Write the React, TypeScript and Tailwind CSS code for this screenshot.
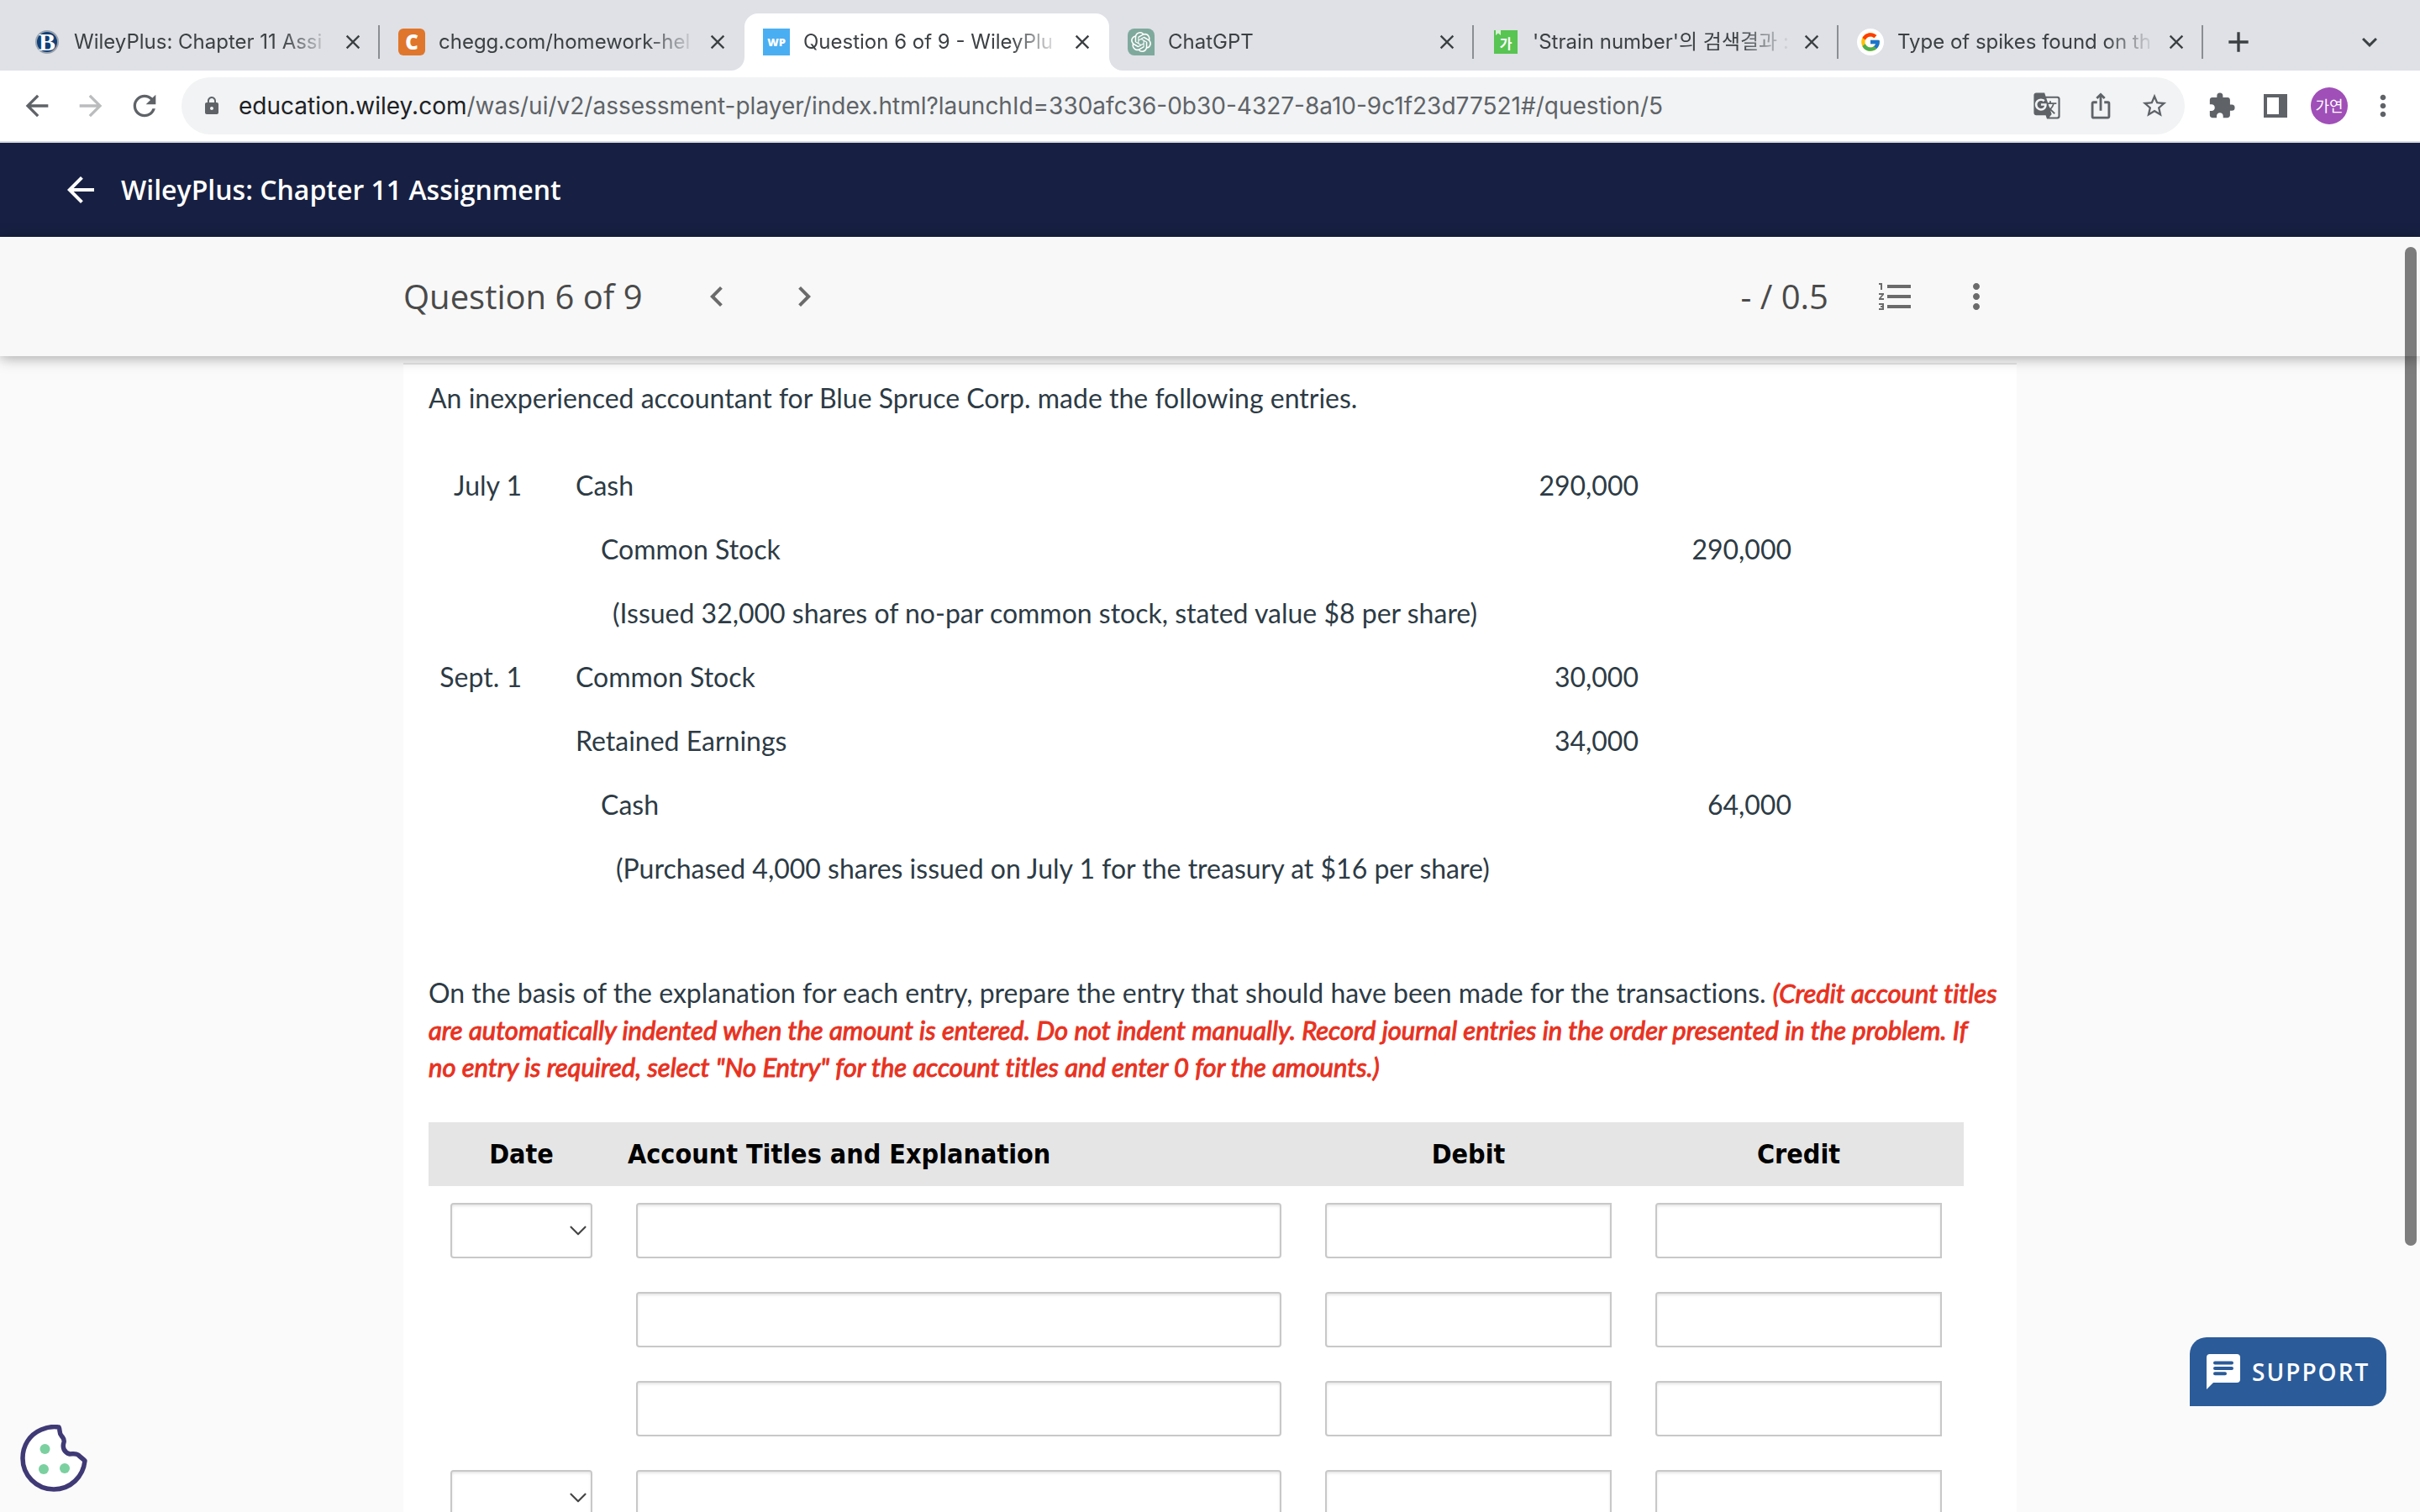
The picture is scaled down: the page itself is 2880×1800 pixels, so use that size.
/**
 * App.tsx — Assessment player inside a browser window
 *
 * 1. Browser chrome (tabs + toolbar)
 * 2. Course header and question bar
 * 3. Question content with the answer table
 */

import type { ReactNode } from 'react'
import { ChevronDown } from 'lucide-react'
import { FcGoogle } from 'react-icons/fc'
import { SiOpenai } from 'react-icons/si'
import {
  MdAdd,
  MdArrowBack,
  MdArrowForward,
  MdChevronLeft,
  MdChevronRight,
  MdClose,
  MdExtension,
  MdFormatListNumbered,
  MdGTranslate,
  MdIosShare,
  MdKeyboardArrowDown,
  MdLock,
  MdMoreVert,
  MdRefresh,
  MdStarBorder,
} from 'react-icons/md'

type Tab = { title: string; icon: ReactNode; active?: boolean; divider?: boolean }

const TABS: Tab[] = [
  { title: 'WileyPlus: Chapter 11 Assi', icon: <BartlebyIcon />, divider: true },
  { title: 'chegg.com/homework-hel', icon: <CheggIcon /> },
  { title: 'Question 6 of 9 - WileyPlu', icon: <WileyIcon />, active: true },
  { title: 'ChatGPT', icon: <ChatGptIcon />, divider: true },
  { title: "'Strain number'의 검색결과 :", icon: <DictIcon />, divider: true },
  { title: 'Type of spikes found on th', icon: <GoogleIcon />, divider: true },
]

type Entry = { date?: string; text: string; indent: string; debit?: string; credit?: string }

const ENTRIES: Entry[] = [
  { date: 'July 1', text: 'Cash', indent: 'pl-16', debit: '290,000' },
  { text: 'Common Stock', indent: 'pl-[94px]', credit: '290,000' },
  { text: '(Issued 32,000 shares of no-par common stock, stated value $8 per share)', indent: 'pl-27' },
  { date: 'Sept. 1', text: 'Common Stock', indent: 'pl-16', debit: '30,000' },
  { text: 'Retained Earnings', indent: 'pl-16', debit: '34,000' },
  { text: 'Cash', indent: 'pl-[94px]', credit: '64,000' },
  { text: '(Purchased 4,000 shares issued on July 1 for the treasury at $16 per share)', indent: 'pl-28' },
]

// true → the row starts a new transaction and has a date drop-down
const ANSWER_ROWS = [true, false, false, true]

export default function App() {
  return (
    <div className="relative flex h-screen flex-col overflow-hidden bg-[#fafafa]">
      <TabStrip />
      <Toolbar />
      <CourseHeader />
      <QuestionBar />
      <main className="min-h-0 flex-1 overflow-hidden pt-2 font-['Lato',sans-serif] text-[32px] leading-[44px] text-[#2d3b45] [font-variant-ligatures:none]">
        <div className="mx-auto max-w-[1920px] border-t-2 border-[#e5e5e5] bg-white pt-[18px] pr-2 pl-[30px]">
          <p>An inexperienced accountant for Blue Spruce Corp. made the following entries.</p>
          <EntriesTable />
          <p className="mt-[88px]">
            On the basis of the explanation for each entry, prepare the entry that should have been made for the
            transactions.{' '}
            <em className="text-[31px] text-[#e8321f] [-webkit-text-stroke:1px_#e8321f]">
              (Credit account titles are automatically indented when the amount is entered. Do not indent manually.
              Record journal entries in the order presented in the problem. If
              <br />
              no entry is required, select "No Entry" for the account titles and enter 0 for the amounts.)
            </em>
          </p>
          <AnswerTable />
        </div>
      </main>

      {/* Scrollbar thumb, floats over the page */}
      <div className="absolute top-[294px] right-1 z-20 h-[1189px] w-3.5 rounded-full bg-black/50" />
      <CookieButton />
      <SupportButton />
    </div>
  )
}

/* ---------- Browser chrome ---------- */

function TabStrip() {
  return (
    <div className="flex h-[84px] shrink-0 items-end bg-[#dfe1e6] pl-[18px] font-['Inter','Noto_Sans_CJK_KR',sans-serif] text-[#3c4043]">
      {TABS.map((tab) => (
        <div
          key={tab.title}
          className={
            tab.active
              ? 'relative flex h-[68px] w-[434px] items-center rounded-t-2xl bg-white pl-[22px] pr-[18px]'
              : 'relative flex h-[68px] w-[434px] items-center pl-[22px] pr-[18px]'
          }
        >
          {tab.active && <TabFeet />}
          <span className="flex w-8 shrink-0 justify-center">{tab.icon}</span>
          <span className="ml-4 min-w-0 flex-1 overflow-hidden whitespace-nowrap text-[24px] leading-8 [mask-image:linear-gradient(to_right,black_80%,transparent)]">
            {tab.title}
          </span>
          <button type="button" aria-label={`Close ${tab.title}`} className="ml-2.5">
            <MdClose size={28} />
          </button>
          {tab.divider && <span className="absolute top-3.5 right-0 h-10 w-0.5 bg-[#8b8e93]" />}
        </div>
      ))}
      <button type="button" aria-label="New tab" className="ml-[22px] flex h-[68px] items-center">
        <MdAdd size={40} />
      </button>
      <button type="button" aria-label="Search tabs" className="mr-[42px] ml-auto flex h-[68px] items-center">
        <MdKeyboardArrowDown size={36} />
      </button>
    </div>
  )
}

// Small curves at the bottom corners of the active tab
function TabFeet() {
  return (
    <>
      <svg className="absolute bottom-0 -left-4 h-4 w-4" viewBox="0 0 16 16" fill="#fff">
        <path d="M16 0v16H0A16 16 0 0 0 16 0z" />
      </svg>
      <svg className="absolute -right-4 bottom-0 h-4 w-4" viewBox="0 0 16 16" fill="#fff">
        <path d="M0 0v16h16A16 16 0 0 1 0 0z" />
      </svg>
    </>
  )
}

function Toolbar() {
  return (
    <div className="flex h-[86px] shrink-0 items-center border-b-2 border-[#dadce0] bg-white pr-6 pl-6 font-['Inter','Noto_Sans_CJK_KR',sans-serif] text-[#5f6368]">
      <button type="button" aria-label="Back">
        <MdArrowBack size={40} />
      </button>
      <button type="button" aria-label="Forward" className="ml-6 text-[#babcbe]">
        <MdArrowForward size={40} />
      </button>
      <button type="button" aria-label="Reload" className="ml-6">
        <MdRefresh size={40} />
      </button>
      <div className="ml-6 flex h-[68px] flex-1 items-center rounded-full bg-[#f1f3f4] pr-[19px] pl-6">
        <MdLock size={24} />
        <div
          role="textbox"
          aria-label="Address"
          className="ml-5 flex-1 overflow-hidden whitespace-nowrap text-[28px] leading-9"
        >
          <span className="text-[#202124]">education.wiley.com</span>
          <span>/was/ui/v2/assessment-player/index.html?launchId=330afc36-0b30-4327-8a10-9c1f23d77521#/question/5</span>
        </div>
        <div className="flex gap-[30px]">
          <button type="button" aria-label="Translate">
            <MdGTranslate size={34} />
          </button>
          <button type="button" aria-label="Share">
            <MdIosShare size={34} />
          </button>
          <button type="button" aria-label="Bookmark">
            <MdStarBorder size={34} />
          </button>
        </div>
      </div>
      <button type="button" aria-label="Extensions" className="ml-[27px]">
        <MdExtension size={34} />
      </button>
      <button type="button" aria-label="Side panel" className="ml-[33px]">
        <svg width="28" height="28" viewBox="0 0 28 28" fill="currentColor">
          <path d="M0 0h28v28H0zM4 4v20h14V4z" fillRule="evenodd" />
        </svg>
      </button>
      <button
        type="button"
        aria-label="Profile"
        className="ml-7 flex size-11 items-center justify-center rounded-full bg-[#a04fb8] text-[18px] text-white"
      >
        가연
      </button>
      <button type="button" aria-label="Menu" className="ml-[22px]">
        <MdMoreVert size={40} />
      </button>
    </div>
  )
}

/* ---------- Wiley header + question bar ---------- */

function CourseHeader() {
  return (
    <header className="flex h-28 shrink-0 items-center bg-[#172042] pl-[72px] font-['Open_Sans',sans-serif] text-white">
      <button type="button" aria-label="Back to course">
        <MdArrowBack size={48} />
      </button>
      <h1 className="ml-6 text-[32px] font-semibold">WileyPlus: Chapter 11 Assignment</h1>
    </header>
  )
}

function QuestionBar() {
  return (
    <div className="z-10 shrink-0 bg-[#f8f8f8] shadow-[0_2px_16px_rgba(0,0,0,0.35)]">
      <div className="mx-auto flex h-[142px] max-w-[1920px] items-center pr-6 font-['Open_Sans',sans-serif] text-[40px] text-[#4a4a4a]">
        <h2>Question 6 of 9</h2>
        <button type="button" aria-label="Previous question" className="ml-16 text-[#6b6b6b]">
          <MdChevronLeft size={48} />
        </button>
        <button type="button" aria-label="Next question" className="ml-14 text-[#6b6b6b]">
          <MdChevronRight size={48} />
        </button>
        <span className="ml-auto">- / 0.5</span>
        <button type="button" aria-label="Question list" className="ml-14 text-[#6b6b6b]">
          <MdFormatListNumbered size={48} />
        </button>
        <button type="button" aria-label="More options" className="ml-12 text-[#6b6b6b]">
          <MdMoreVert size={48} />
        </button>
      </div>
    </div>
  )
}

/* ---------- Question content ---------- */

function EntriesTable() {
  return (
    <table className="mt-11 w-[1622px] table-fixed">
      <colgroup>
        <col className="w-[111px]" />
        <col />
        <col className="w-[160px]" />
        <col className="w-[182px]" />
      </colgroup>
      <tbody>
        {ENTRIES.map((entry, i) => (
          <tr key={i} className="h-[76px]">
            <td className="text-right whitespace-nowrap">{entry.date}</td>
            <td className={entry.indent}>{entry.text}</td>
            <td className="text-right">{entry.debit}</td>
            <td className="text-right">{entry.credit}</td>
          </tr>
        ))}
      </tbody>
    </table>
  )
}

const FIELD =
  'block h-[66px] w-full border-2 border-[#c8c8c8] bg-white px-4 shadow-[inset_0_2px_3px_rgba(0,0,0,0.1)]'

function AnswerTable() {
  return (
    <table className="mt-11 w-[1827px] table-fixed">
      <colgroup>
        <col className="w-[221px]" />
        <col />
        <col className="w-[393px]" />
        <col className="w-[393px]" />
      </colgroup>
      <thead className="bg-[#e5e5e5] font-['DejaVu_Sans_Condensed','DejaVu_Sans',sans-serif] text-[32px] text-black">
        <tr className="h-[76px]">
          <th>Date</th>
          <th className="pl-4 text-left">Account Titles and Explanation</th>
          <th>Debit</th>
          <th>Credit</th>
        </tr>
      </thead>
      <tbody>
        {ANSWER_ROWS.map((hasDate, i) => (
          <tr key={i} className="h-[106px]">
            <td className="px-[26px]">
              {hasDate && (
                <div className="relative">
                  <select aria-label={`Date, row ${i + 1}`} className={`${FIELD} appearance-none rounded`} />
                  <ChevronDown
                    size={34}
                    strokeWidth={1.5}
                    className="pointer-events-none absolute top-4 right-0 text-[#444]"
                  />
                </div>
              )}
            </td>
            <td className="px-[26px]">
              <input type="text" aria-label={`Account title, row ${i + 1}`} className={`${FIELD} rounded`} />
            </td>
            <td className="px-[26px]">
              <input type="text" aria-label={`Debit, row ${i + 1}`} className={`${FIELD} rounded-l`} />
            </td>
            <td className="px-[26px]">
              <input type="text" aria-label={`Credit, row ${i + 1}`} className={`${FIELD} rounded-l`} />
            </td>
          </tr>
        ))}
      </tbody>
    </table>
  )
}

/* ---------- Floating buttons ---------- */

function SupportButton() {
  return (
    <button
      type="button"
      className="absolute right-10 bottom-[126px] z-20 flex h-[82px] w-[234px] items-center gap-3.5 rounded-[20px] rounded-bl-none bg-[#2b5b99] pl-5 font-['Open_Sans',sans-serif] text-[28px] font-semibold tracking-[2px] text-white"
    >
      <svg width="40" height="42" viewBox="0 0 40 42" className="shrink-0">
        <path d="M4 0h32a4 4 0 0 1 4 4v26a4 4 0 0 1-4 4H8l-8 8V4a4 4 0 0 1 4-4z" fill="#fff" />
        <g stroke="#2b5b99" strokeWidth="4" strokeLinecap="round">
          <path d="M10 10.500h20M10 17h20M10 23.300h12" />
        </g>
      </svg>
      SUPPORT
    </button>
  )
}

function CookieButton() {
  return (
    <button type="button" aria-label="Cookie settings" className="absolute bottom-6 left-6 z-20">
      <svg width="80" height="80" viewBox="0 0 80 80">
        <path
          d="M46 3C40 2 32 3 25 6C11 12 3 25 3 40C3 60 19 77 40 77C60 77 75 62 77 43C74 40 72 39 69 36C66 34 63 35 59 35C52 33 50 27 52 21C53 17 51 16 49 13C46 10 48 7 46 3Z"
          fill="#fff"
          stroke="#3f3a75"
          strokeWidth="5.500"
          strokeLinejoin="round"
        />
        <g fill="#7bd0a0">
          <circle cx="29.500" cy="29" r="6" />
          <circle cx="28" cy="53" r="6" />
          <circle cx="53" cy="52" r="6" />
        </g>
      </svg>
    </button>
  )
}

/* ---------- Favicons ---------- */

function BartlebyIcon() {
  return (
    <span className="flex size-7 items-center justify-center rounded-full border-2 border-[#9aa3ad] bg-[#123f77] font-['Liberation_Serif',serif] text-[30px] leading-none font-bold text-white">
      B
    </span>
  )
}

function CheggIcon() {
  return (
    <span className="flex size-8 items-center justify-center rounded-md bg-[#e0762b] font-['Open_Sans',sans-serif] text-[24px] leading-none font-extrabold text-white">
      C
    </span>
  )
}

function WileyIcon() {
  return (
    <span className="flex size-8 items-center justify-center bg-[#4aaef2] font-['Open_Sans',sans-serif] text-[13px] leading-none font-extrabold text-white">
      WP
    </span>
  )
}

function ChatGptIcon() {
  return (
    <span className="flex size-8 items-center justify-center rounded-lg rounded-br-none bg-[#7fa99c] text-white">
      <SiOpenai size={24} />
    </span>
  )
}

function DictIcon() {
  return (
    <span className="relative flex h-7 w-7 items-end justify-center bg-[#58c452] pb-1 text-[16px] leading-none font-bold text-white">
      가
      <svg className="absolute top-0 left-0.5" width="6" height="6" viewBox="0 0 6 6" fill="#d6f2d4">
        <path d="M0 0h6v6L3 3.500 0 6z" />
      </svg>
    </span>
  )
}

function GoogleIcon() {
  return (
    <span className="flex size-8 items-center justify-center rounded-full bg-white">
      <FcGoogle size={26} />
    </span>
  )
}
